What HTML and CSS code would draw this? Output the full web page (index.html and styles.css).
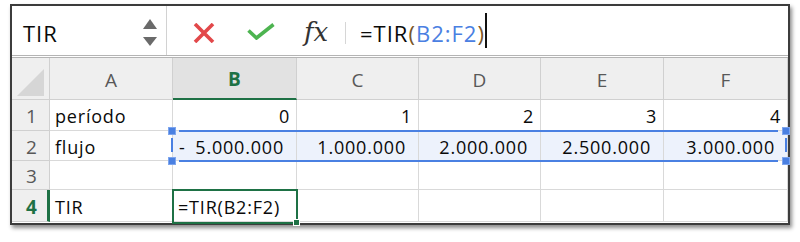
FILE: index.html
```html
<!DOCTYPE html>
<html lang="es">
<head>
<meta charset="utf-8">
<title>TIR</title>
<link rel="stylesheet" href="styles.css">
</head>
<body>
<div class="window">
  <div class="fbar">
    <div class="namebox">
      <span class="name">TIR</span>
      <svg class="spin" width="14" height="27" viewBox="0 0 14 27">
        <path d="M7 0 L14 10 L0 10 Z" fill="#6a6a6a"/>
        <path d="M0 18 L14 18 L7 27 Z" fill="#6a6a6a"/>
      </svg>
    </div>
    <div class="btns">
      <svg class="cancel" width="22" height="20" viewBox="0 0 22 20">
        <path d="M2 1 L20 19 M20 1 L2 19" stroke="#e2484a" stroke-width="3.6" stroke-linecap="butt"/>
      </svg>
      <svg class="ok" width="28" height="17" viewBox="0 0 28 17">
        <path d="M1.5 7.5 L9.5 15 L26.5 1.5" fill="none" stroke="#4db450" stroke-width="3.6" stroke-linejoin="miter"/>
      </svg>
      <span class="fx">fx</span>
    </div>
    <div class="sep"></div>
    <div class="formula">=TIR<span class="paren">(</span><span class="ref">B2:F2</span><span class="paren">)</span><span class="cursor"></span></div>
  </div>

  <div class="sheet">
    <div class="hd corner"><span class="tri"></span></div>
    <div class="hd col">A</div>
    <div class="hd col active">B</div>
    <div class="hd col">C</div>
    <div class="hd col">D</div>
    <div class="hd col">E</div>
    <div class="hd col">F</div>

    <div class="hd row">1</div>
    <div class="c">período</div>
    <div class="c num">0</div>
    <div class="c num">1</div>
    <div class="c num">2</div>
    <div class="c num">3</div>
    <div class="c num">4</div>

    <div class="hd row">2</div>
    <div class="c">flujo</div>
    <div class="c acc sel"><span class="minus">-</span><span>5.000.000</span></div>
    <div class="c acc sel"><span></span><span>1.000.000</span></div>
    <div class="c acc sel"><span></span><span>2.000.000</span></div>
    <div class="c acc sel"><span></span><span>2.500.000</span></div>
    <div class="c acc sel"><span></span><span>3.000.000</span></div>

    <div class="hd row">3</div>
    <div class="c"></div>
    <div class="c"></div>
    <div class="c"></div>
    <div class="c"></div>
    <div class="c"></div>
    <div class="c"></div>

    <div class="hd row activerow">4</div>
    <div class="c">TIR</div>
    <div class="c">=TIR(B2:F2)</div>
    <div class="c"></div>
    <div class="c"></div>
    <div class="c"></div>
    <div class="c"></div>

    <div class="range-top"></div>
    <div class="range-bottom"></div>
    <div class="range-left"></div>
    <div class="range-right"></div>
    <div class="handle h-tl"></div>
    <div class="handle h-bl"></div>
    <div class="handle h-tr"></div>
    <div class="handle h-br"></div>
    <div class="activecell"><span class="fill"></span></div>
  </div>
</div>
</body>
</html>
```

FILE: styles.css
```css
* { box-sizing: border-box; }
html, body { margin: 0; padding: 0; background: #ffffff; }
body { width: 800px; height: 242px; overflow: hidden; padding: 4px 0 0 10px; }

.window {
  width: 780px;
  border: 2px solid #3c3c3c;
  background: #fff;
  box-shadow: 2px 3px 4px rgba(0,0,0,0.45);
  font-family: "Open Sans", "Liberation Sans", sans-serif;
  color: #0a0a0a;
}

/* formula bar */
.fbar {
  height: 50px;
  display: flex;
  align-items: center;
  border-bottom: 1px solid #b4b4b4;
}
.namebox {
  width: 155px;
  height: 100%;
  display: flex;
  align-items: center;
  padding-left: 11px;
  border-right: 1px solid #d2d2d2;
}
.name { font-size: 22px; letter-spacing: 1px; padding-top: 4px; flex: 1; }
.spin { margin-right: 9px; margin-top: 3px; }
.btns {
  width: 178px;
  height: 100%;
  display: flex;
  align-items: center;
  padding-left: 26px;
}
.cancel { margin-top: 4px; }
.ok { margin-left: 32px; margin-top: 1px; }
.fx {
  margin-left: 29px;
  font-family: "DejaVu Serif", "Liberation Serif", serif;
  font-style: italic;
  font-size: 26px;
  color: #333;
  padding-top: 2px;
}
.sep { width: 1px; height: 22px; background: #d6d6d6; margin-top: 4px; }
.formula {
  margin-left: 14px;
  font-size: 22px;
  letter-spacing: 1px;
  padding-top: 4px;
  display: flex;
  align-items: center;
  white-space: pre;
}
.paren { color: #7a5526; }
.ref { color: #4a80e2; }
.cursor { display: inline-block; width: 2px; height: 35px; background: #111; margin-left: 0; margin-top: -4px; }

/* sheet */
.sheet {
  position: relative;
  margin-top: 1px;
  border-top: 1px solid #b4b4b4;
  display: grid;
  grid-template-columns: 38px 123px 124px 122px 122px 123px 124px;
  grid-template-rows: 42px 31px 30px 29px 32px;
  padding-bottom: 1px;
}
.hd {
  background: #efefef;
  color: #585858;
  font-size: 19px;
  display: flex;
  align-items: center;
  justify-content: center;
  border-right: 1px solid #d0d0d0;
  border-bottom: 1px solid #d0d0d0;
  padding-top: 2px;
}
.corner { position: relative; }
.tri {
  position: absolute;
  right: 5px;
  bottom: 3px;
  width: 0; height: 0;
  border-left: 27px solid transparent;
  border-bottom: 27px solid #d6d6d6;
}
.col.active {
  background: #e2e2e2;
  color: #1e7145;
  font-weight: 700;
  border-bottom: 2px solid #1e7145;
}
.row { padding-left: 2px; }
.row.activerow {
  color: #1e7145;
  font-weight: 700;
  border-right: 3px solid #1e7145;
  padding-left: 4px;
}
.c {
  font-size: 18px;
  letter-spacing: 0.8px;
  border-right: 1px solid #d9d9d9;
  border-bottom: 1px solid #d9d9d9;
  display: flex;
  align-items: center;
  padding: 2px 6px 0 5px;
  white-space: nowrap;
}
.num { justify-content: flex-end; }
.acc { justify-content: space-between; padding-right: 12px; }
.sel { background: #edf2fc; }
.minus { padding-left: 1px; }

/* selection overlay */
.range-top, .range-bottom {
  position: absolute;
  left: 167px;
  width: 599px;
  height: 2px;
  background: #4a80e2;
}
.range-top { top: 72px; }
.range-bottom { top: 102px; }
.range-left, .range-right {
  position: absolute;
  top: 80px;
  width: 2px;
  height: 14px;
  background: #4a80e2;
}
.range-left { left: 159px; }
.range-right { left: 773px; }
.handle {
  position: absolute;
  width: 8px;
  height: 8px;
  background: #4a80e2;
  border: 1px solid #7ea6ee;
}
.h-tl { left: 156px; top: 69px; }
.h-bl { left: 156px; top: 99px; }
.h-tr { left: 770px; top: 69px; }
.h-br { left: 770px; top: 99px; }

.activecell {
  position: absolute;
  left: 160px;
  top: 131px;
  width: 126px;
  height: 35px;
  border: 2px solid #1e7145;
}
.fill {
  position: absolute;
  right: -4px;
  bottom: -4px;
  width: 7px;
  height: 7px;
  background: #1e7145;
  border: 1px solid #fff;
}
```
